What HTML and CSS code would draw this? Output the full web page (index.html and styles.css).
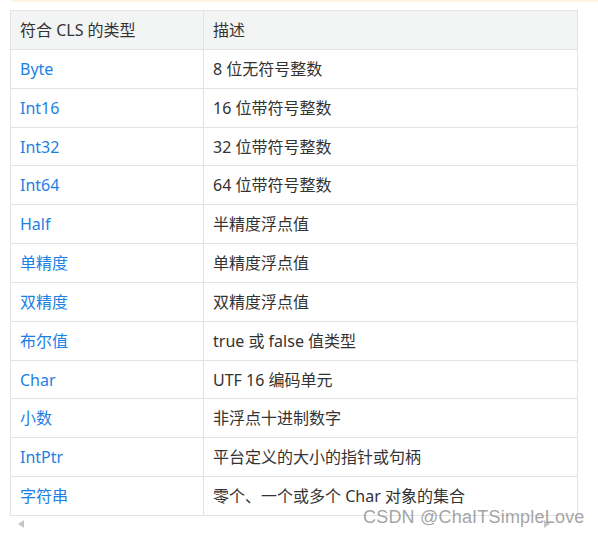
FILE: index.html
```html
<!DOCTYPE html>
<html lang="zh-CN">
<head>
<meta charset="utf-8">
<link rel="stylesheet" href="styles.css">
</head>
<body>
<div class="page">
  <div class="band"></div>
  <div class="scroller">
    <table class="types">
      <thead>
        <tr><th class="c1">符合 CLS 的类型</th><th>描述</th></tr>
      </thead>
      <tbody>
        <tr><td><a>Byte</a></td><td>8 位无符号整数</td></tr>
        <tr><td><a>Int16</a></td><td>16 位带符号整数</td></tr>
        <tr><td><a>Int32</a></td><td>32 位带符号整数</td></tr>
        <tr><td><a>Int64</a></td><td>64 位带符号整数</td></tr>
        <tr><td><a>Half</a></td><td>半精度浮点值</td></tr>
        <tr><td><a>单精度</a></td><td>单精度浮点值</td></tr>
        <tr><td><a>双精度</a></td><td>双精度浮点值</td></tr>
        <tr><td><a>布尔值</a></td><td>true 或 false 值类型</td></tr>
        <tr><td><a>Char</a></td><td>UTF 16 编码单元</td></tr>
        <tr><td><a>小数</a></td><td>非浮点十进制数字</td></tr>
        <tr><td><a>IntPtr</a></td><td>平台定义的大小的指针或句柄</td></tr>
        <tr><td><a>字符串</a></td><td>零个、一个或多个 Char 对象的集合</td></tr>
      </tbody>
    </table>
    <div class="scrollbar">
      <span class="arrow left"></span>
      <span class="arrow right"></span>
    </div>
    <div class="watermark">CSDN @ChaITSimpleLove</div>
  </div>
</div>
</body>
</html>
```

FILE: styles.css
```css
html, body {
  margin: 0;
  padding: 0;
  background: #ffffff;
}
.page {
  width: 598px;
  height: 538px;
  overflow: hidden;
  font-family: "Noto Sans", "Noto Sans CJK SC", sans-serif;
}
.band {
  height: 2px;
  margin-left: 11px;
  background: #fcf5e4;
}
.scroller {
  position: relative;
  padding: 8px 0 0 10px;
}
.types {
  border-collapse: collapse;
  width: 568px;
  font-size: 16px;
  color: #333333;
  table-layout: fixed;
}
.types th,
.types td {
  border: 1px solid #e3e3e3;
  padding: 8px 9px 6px;
  line-height: 23.85px;
  text-align: left;
  font-weight: normal;
  white-space: nowrap;
}
.types th {
  background: #f3f4f4;
}
.types .c1 {
  width: 174px;
}
.types a {
  color: #1d81e4;
  text-decoration: none;
}
.scrollbar {
  display: flex;
  justify-content: space-between;
  padding: 4px 28px 0 8px;
  width: 532px;
}
.arrow {
  width: 0;
  height: 0;
  border-top: 4px solid transparent;
  border-bottom: 4px solid transparent;
}
.arrow.left {
  border-right: 6px solid #c6c6c6;
}
.arrow.right {
  border-left: 6px solid #c6c6c6;
}
.watermark {
  position: absolute;
  left: 363px;
  top: 505px;
  font-family: "Liberation Sans", Arial, sans-serif;
  font-size: 18px;
  color: rgba(140, 140, 140, 0.8);
  letter-spacing: 0.2px;
  white-space: nowrap;
}
```
